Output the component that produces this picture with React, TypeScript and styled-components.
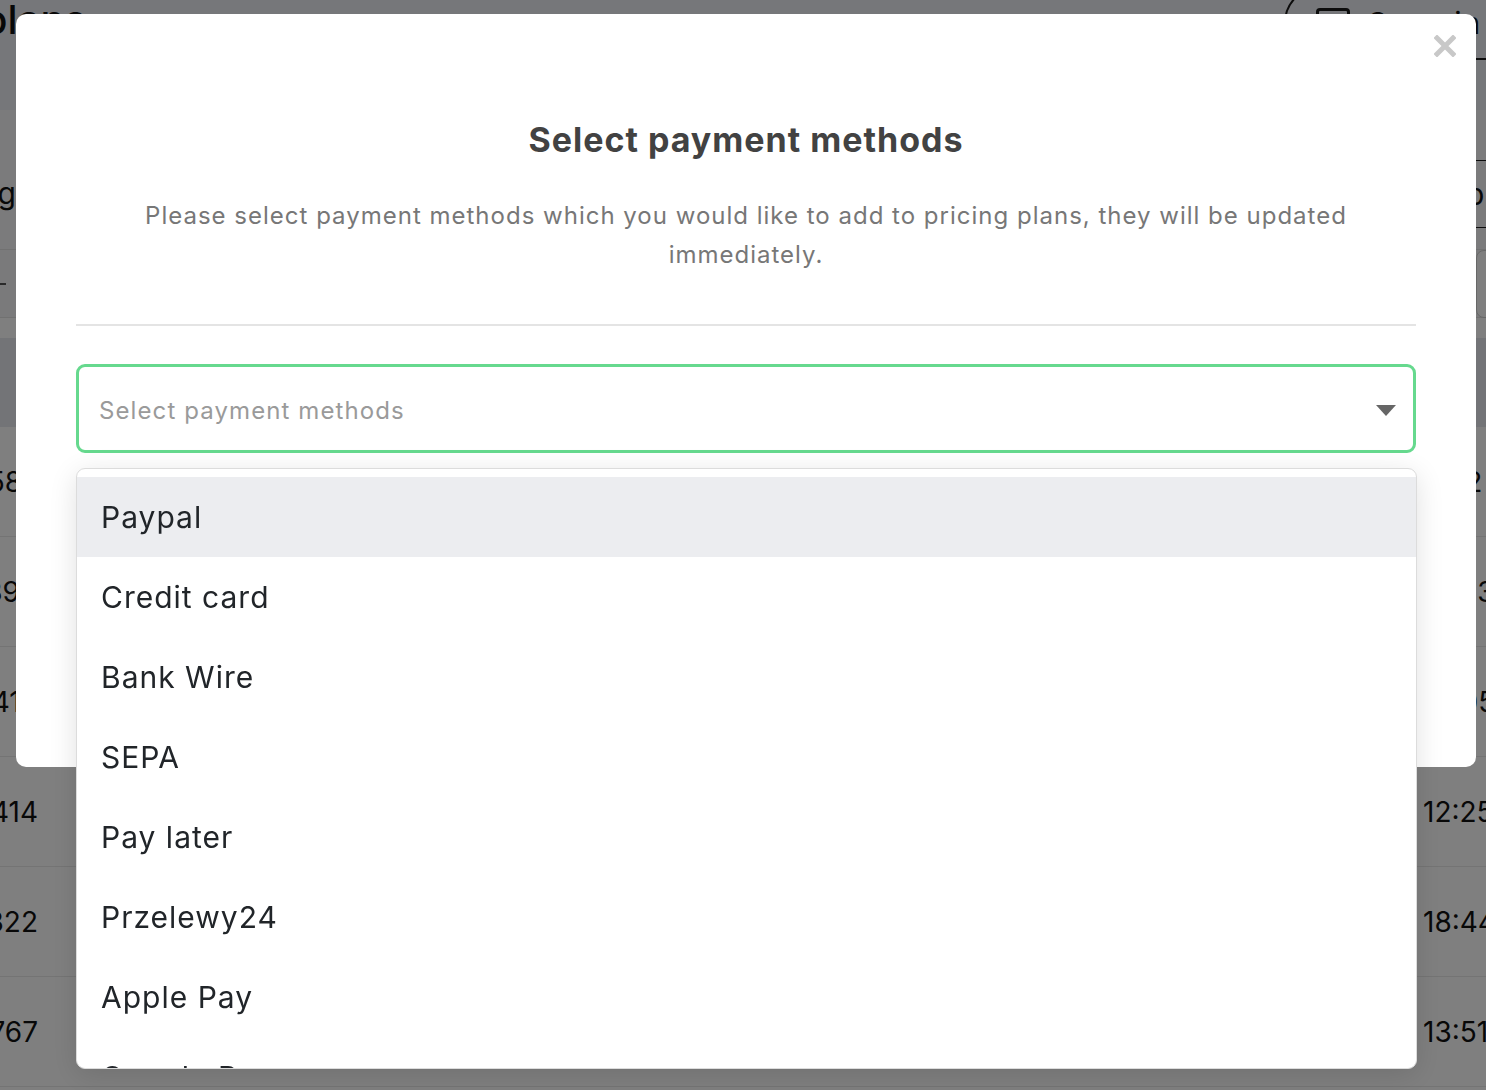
import React from "react";
import styled, { createGlobalStyle } from "styled-components";

const GlobalStyle = createGlobalStyle`
  html, body {
    margin: 0;
    padding: 0;
  }
  body {
    width: 1486px;
    height: 1090px;
    overflow: hidden;
    background: #ffffff;
    font-family: Inter, "Noto Sans", "Liberation Sans", sans-serif;
    letter-spacing: 1px;
    color: #111;
  }
  * { box-sizing: border-box; }
`;

/* ---------- Background page ---------- */

const Page = styled.div`
  width: 1486px;
  height: 1090px;
  overflow: hidden;
  display: flex;
  flex-direction: column;
  background: #ffffff;
`;

const TopBar = styled.header`
  height: 110px;
  flex-shrink: 0;
  background: #edeff4;
  display: flex;
  justify-content: space-between;
  align-items: flex-start;
`;

const EdgeText = styled.div<{ $width: number; $size?: number }>`
  width: ${(p) => p.$width}px;
  flex-shrink: 0;
  display: flex;
  justify-content: flex-end;
  white-space: nowrap;
  font-size: ${(p) => p.$size ?? 28}px;
  letter-spacing: 0;
  color: #111;
`;

const PageTitle = styled(EdgeText)`
  margin-top: -4px;
  font-size: 40px;
  line-height: 48px;
  font-weight: 500;
`;

const HeaderButton = styled.div`
  margin-top: -14px;
  margin-right: -88px;
  height: 74px;
  padding: 0 20px 0 30px;
  border: 2px solid #1a1a1a;
  border-radius: 37px;
  display: flex;
  align-items: center;
  gap: 16px;
  font-size: 30px;
  white-space: nowrap;
`;

const SquareIcon = styled.span`
  width: 34px;
  height: 30px;
  border: 3px solid #1a1a1a;
  border-radius: 4px;
`;

const TabsRow = styled.div`
  height: 140px;
  flex-shrink: 0;
  background: #f7f7f8;
  border-bottom: 1px solid #e2e2e2;
  display: flex;
  justify-content: space-between;
  align-items: flex-end;
`;

const TabLabel = styled(EdgeText)`
  font-size: 30px;
  line-height: 40px;
  margin-bottom: 36px;
`;

const SidePanel = styled.div`
  width: 140px;
  margin-right: -120px;
  height: 68px;
  margin-bottom: 21px;
  border-top: 1px solid #1a1a1a;
  border-bottom: 1px solid #1a1a1a;
  display: flex;
  align-items: center;
  font-size: 30px;
`;

const ToolRow = styled.div`
  height: 68px;
  flex-shrink: 0;
  background: #f5f5f6;
  border-bottom: 1px solid #e2e2e2;
  display: flex;
  justify-content: space-between;
  align-items: center;
`;

const Dash = styled.span`
  width: 6px;
  height: 2px;
  background: #555;
`;

const FilterBox = styled.div`
  width: 120px;
  margin-right: -110px;
  height: 68px;
  border: 1px solid #cfcfcf;
  border-radius: 8px;
  background: #ffffff;
`;

const TableHead = styled.div`
  margin-top: 20px;
  height: 89px;
  flex-shrink: 0;
  background: #e6e8ee;
`;

const Row = styled.div`
  height: 110px;
  flex-shrink: 0;
  border-bottom: 1px solid #e9e9e9;
  display: flex;
  justify-content: space-between;
  align-items: center;
  font-size: 28px;
`;

const TimeCell = styled.div`
  width: 63px;
  flex-shrink: 0;
  white-space: nowrap;
  font-size: 28px;
  letter-spacing: 0;
  color: #111;
`;

/* ---------- Modal ---------- */

const Overlay = styled.div`
  position: fixed;
  inset: 0;
  background: rgba(0, 0, 0, 0.5);
  display: flex;
  justify-content: flex-start;
  align-items: flex-start;
  padding: 14px 0 0 16px;
`;

const Modal = styled.div`
  position: relative;
  width: 1460px;
  min-height: 753px;
  background: #ffffff;
  border-radius: 10px;
  padding: 106px 60px 0;
  display: flex;
  flex-direction: column;
  align-items: center;
`;

const CloseButton = styled.button`
  position: absolute;
  top: 21px;
  right: 20px;
  width: 22px;
  height: 22px;
  padding: 0;
  border: none;
  background: transparent;
  cursor: pointer;
  display: flex;
`;

const Title = styled.h2`
  margin: 0;
  font-size: 34px;
  line-height: 40px;
  font-weight: 700;
  color: #424242;
  text-align: center;
`;

const Description = styled.p`
  margin: 36px 0 0;
  max-width: 1240px;
  font-size: 24px;
  line-height: 39px;
  color: #777777;
  text-align: center;
`;

const Divider = styled.hr`
  align-self: stretch;
  margin: 50px 0 0;
  border: none;
  height: 2px;
  background: #e4e4e4;
`;

const SelectWrap = styled.div`
  position: relative;
  align-self: stretch;
  margin-top: 38px;
`;

const SelectBox = styled.div`
  height: 89px;
  border: 3px solid #66d98e;
  border-radius: 9px;
  display: flex;
  align-items: center;
  justify-content: space-between;
  padding: 4px 17px 0 20px;
`;

const Placeholder = styled.span`
  font-size: 24px;
  letter-spacing: 1.1px;
  color: #9a9a9a;
`;

const Menu = styled.ul`
  position: absolute;
  top: calc(100% + 15px);
  left: 0;
  right: -1px;
  height: 601px;
  margin: 0;
  padding: 8px 0 0;
  list-style: none;
  background: #ffffff;
  border: 1px solid #dcdcdc;
  border-radius: 9px;
  box-shadow: 0 6px 28px rgba(0, 0, 0, 0.12);
  overflow: hidden;
  z-index: 2;
`;

const MenuItem = styled.li<{ $active?: boolean }>`
  height: 80px;
  display: flex;
  align-items: center;
  padding-left: 24px;
  font-size: 30px;
  color: #212529;
  background: ${(p) => (p.$active ? "#ecedf0" : "transparent")};
`;

const methods = [
  "Paypal",
  "Credit card",
  "Bank Wire",
  "SEPA",
  "Pay later",
  "Przelewy24",
  "Apple Pay",
  "Google Pay",
  "Klarna",
];

const rows = [
  { id: "12587", time: "11:12" },
  { id: "10394", time: "10:23" },
  { id: "12416", time: "14:05" },
  { id: "20414", time: "12:25" },
  { id: "11322", time: "18:44" },
  { id: "19767", time: "13:51" },
];

export default function App() {
  return (
    <>
      <GlobalStyle />
      <Page>
        <TopBar>
          <PageTitle $width={86}>Pricing plans</PageTitle>
          <HeaderButton>
            <SquareIcon />
            Copy in Hub
          </HeaderButton>
        </TopBar>
        <TabsRow>
          <TabLabel $width={16}>Billing</TabLabel>
          <SidePanel>pay</SidePanel>
        </TabsRow>
        <ToolRow>
          <Dash />
          <FilterBox />
        </ToolRow>
        <TableHead />
        {rows.map((r) => (
          <Row key={r.id}>
            <EdgeText $width={38}>{r.id}</EdgeText>
            <TimeCell>{r.time}</TimeCell>
          </Row>
        ))}
      </Page>

      <Overlay>
        <Modal role="dialog" aria-modal="true">
          <CloseButton aria-label="Close">
            <svg width="22" height="22" viewBox="0 0 22 22">
              <path
                d="M3 3 L19 19 M19 3 L3 19"
                stroke="#c8c8c8"
                strokeWidth="5"
                strokeLinecap="square"
              />
            </svg>
          </CloseButton>
          <Title>Select payment methods</Title>
          <Description>
            Please select payment methods which you would like to add to
            pricing plans, they will be updated immediately.
          </Description>
          <Divider />
          <SelectWrap>
            <SelectBox>
              <Placeholder>Select payment methods</Placeholder>
              <svg width="20" height="11" viewBox="0 0 20 11">
                <path d="M0 0 H20 L10 11 Z" fill="#666666" />
              </svg>
            </SelectBox>
            <Menu role="listbox">
              {methods.map((m, i) => (
                <MenuItem key={m} $active={i === 0} role="option">
                  {m}
                </MenuItem>
              ))}
            </Menu>
          </SelectWrap>
        </Modal>
      </Overlay>
    </>
  );
}
